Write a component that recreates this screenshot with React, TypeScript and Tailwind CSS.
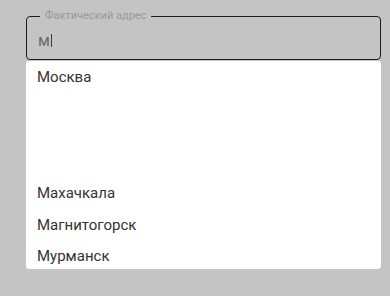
import React from "react";

export default function App() {
  const font = { fontFamily: "Roboto, 'Noto Sans', sans-serif" };
  return (
    <div
      className="w-[390px] h-[296px] bg-[#c4c4c4] pl-[26px] pr-[9px] pt-[9px] font-['Roboto',sans-serif]"
      style={font}
    >
      <fieldset className="border border-[#1c1c1c] rounded-[4px] h-[51px] px-[11px]">
        <legend className="ml-[2px] px-[5px] text-[11px] leading-[14px] text-[#9a9a9a]">
          Фактический адрес
        </legend>
        <div className="h-[35px] flex items-center">
          <span className="text-[16px] text-[#6a6a6a]">м</span>
          <span className="ml-[1px] w-px h-[13px] bg-[#3a3a3a]" />
        </div>
      </fieldset>
      <div className="mt-[1px] bg-white rounded-[3px] h-[208px] overflow-hidden">
        <div className="h-8 flex items-center px-[11px] text-[15px] text-[#333333]">Москва</div>
        <div className="h-[84px]" />
        <div className="h-8 flex items-center px-[11px] text-[15px] text-[#333333]">Махачкала</div>
        <div className="h-8 flex items-center px-[11px] text-[15px] text-[#333333]">Магнитогорск</div>
        <div className="h-8 flex items-center px-[11px] text-[15px] text-[#333333] -mt-px">Мурманск</div>
      </div>
    </div>
  );
}
